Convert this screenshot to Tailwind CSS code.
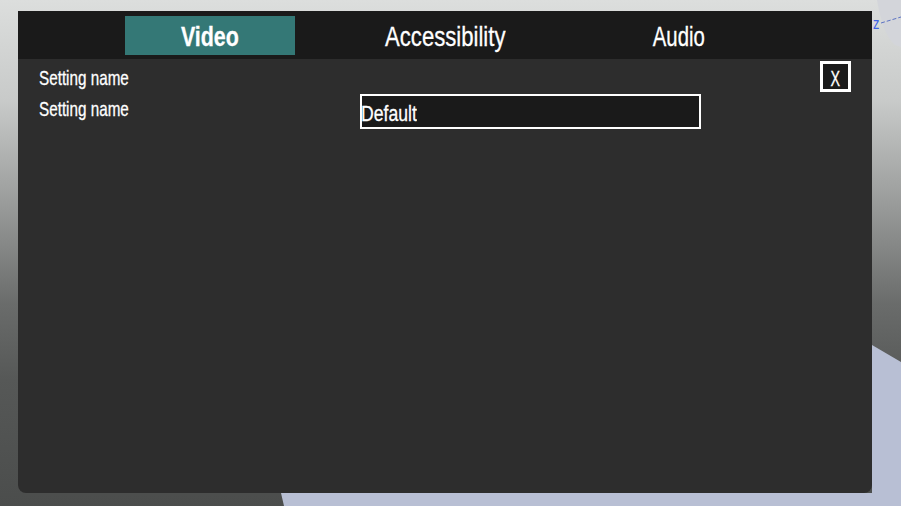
<!DOCTYPE html>
<html lang="en">

<head>
	<meta charset="UTF-8">
	<meta name="viewport" content="width=device-width, initial-scale=1.0">
	<title>Settings</title>
	<script src="https://cdn.jsdelivr.net/npm/@tailwindcss/browser@4"></script>
</head>

<body class="relative w-[901px] h-[506px] overflow-hidden bg-[linear-gradient(#dcdedd_0%,#c8cac9_20%,#9a9c9b_40%,#6a6c6b_60%,#565857_75%,#4b4d4c_100%)] font-['Liberation_Sans',sans-serif] text-white">
	<!-- Scene behind the menu -->
	<svg class="absolute inset-0" width="901" height="506" viewBox="0 0 901 506" fill="none">
		<polygon points="872,345 901,362 901,506 284,506 281,493 872,493" fill="#b8bfd4" />
		<path d="M877 0 C880 18 886 38 895 45 L901 47 L901 0 Z" fill="#d3d5da" />
		<line x1="881" y1="23" x2="901" y2="17" stroke="#5c73c4" stroke-dasharray="4 2" />
		<text x="873" y="29" font-size="16" fill="#3f63e6" font-family="Liberation Sans" transform="translate(873 0) scale(0.8 1) translate(-873 0)">z</text>
	</svg>

	<!-- Settings panel -->
	<div class="absolute left-[18px] top-[11px] w-[854px] h-[482px] rounded-b-lg bg-[#2d2d2d] flex flex-col [-webkit-text-stroke:0.3px_white]">
		<div class="h-[48px] bg-[#1a1a1a] flex items-start pt-[5px] pl-[107px] text-[28px] leading-[42px]">
			<button class="w-[170px] h-[39px] bg-[#347876] font-bold"><span class="inline-block scale-x-[0.765]">Video</span></button>
			<button class="w-[300px] h-[39px]"><span class="inline-block scale-x-[0.79]">Accessibility</span></button>
			<button class="w-[168px] h-[39px]"><span class="inline-block scale-x-[0.727]">Audio</span></button>
		</div>
		<div class="relative flex-1 pl-[21px] pt-[4px] text-[21px]">
			<div class="h-[31px] leading-[30px]"><span class="inline-block origin-left scale-x-[0.726]">Setting name</span></div>
			<div class="flex h-[31px] leading-[30px]">
				<span class="w-[321px]"><span class="inline-block origin-left scale-x-[0.726]">Setting name</span></span>
				<div class="w-[341px] h-[35px] border-2 border-white bg-[#1a1a1a] text-[22px] leading-[36px] shrink-0"><span class="inline-block origin-left -ml-[1px] scale-x-[0.8]">Default</span></div>
			</div>
			<button class="absolute right-[21px] top-[2px] w-[31px] h-[31px] border-[3px] border-white bg-[#1a1a1a] text-[22px] leading-[30px]"><span class="inline-block scale-x-[0.65]">X</span></button>
		</div>
	</div>
</body>

</html>
